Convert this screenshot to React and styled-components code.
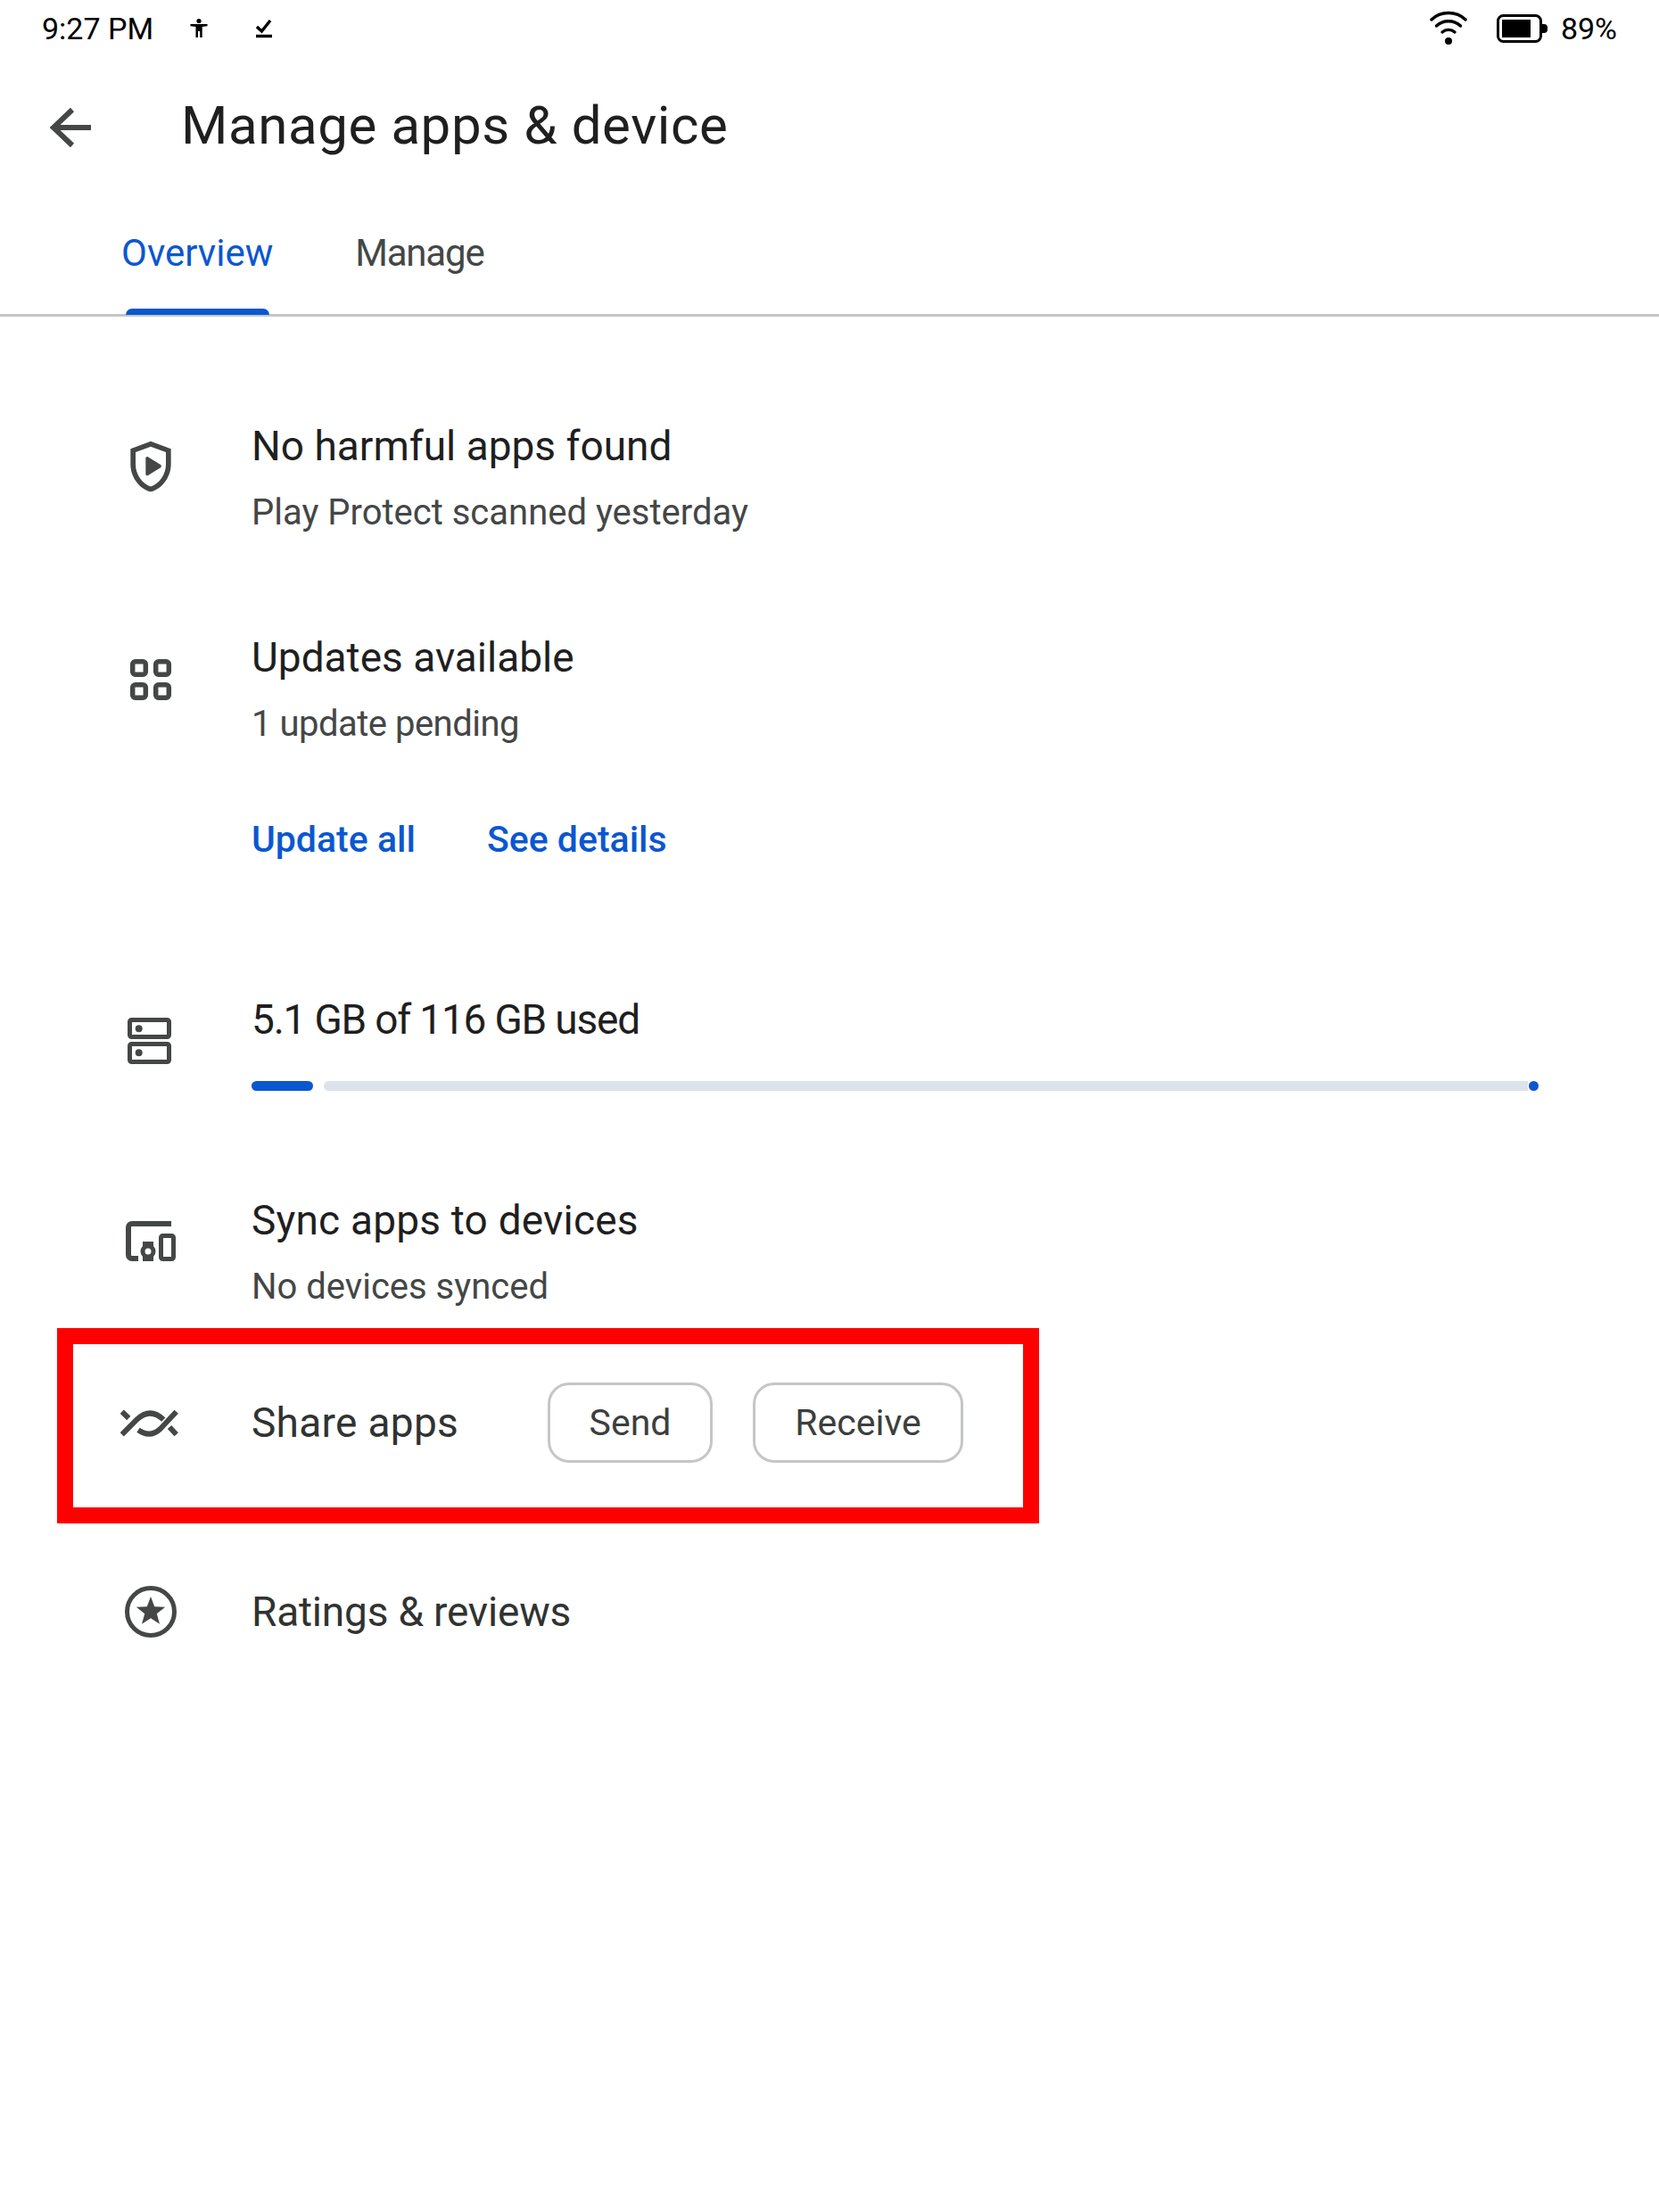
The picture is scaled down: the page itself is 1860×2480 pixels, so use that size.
import styled, { createGlobalStyle } from "styled-components";

const GlobalStyle = createGlobalStyle`
  html, body {
    margin: 0;
    padding: 0;
    background: #fff;
    font-family: Roboto, "Noto Sans", sans-serif;
  }
`;

const Page = styled.div`
  width: 1860px;
  height: 2480px;
  background: #fff;
  overflow: hidden;
`;

const StatusBar = styled.div`
  display: flex;
  align-items: center;
  height: 64px;
  padding: 0 47px;
  color: #000;
  font-size: 34px;
`;

const StatusIcon = styled.svg`
  flex: none;
  margin-left: ${(p) => p.$left || 0}px;
`;

const BatterySlot = styled.span`
  display: flex;
  margin-left: 33px;
`;

const BatteryLabel = styled.span`
  margin-left: 15px;
`;

const Spacer = styled.div`
  flex: 1;
`;

const Header = styled.div`
  display: flex;
  align-items: center;
  height: 74px;
  margin-top: 40px;
  padding-left: 50px;
`;

const Title = styled.h1`
  margin: 0 0 0 93px;
  font-size: 60px;
  font-weight: 400;
  line-height: 74px;
  letter-spacing: 0.6px;
  color: #1f1f1f;
`;

const Tabs = styled.div`
  display: flex;
  height: 98px;
  margin-top: 62px;
  padding: 14px 0 0 136px;
  border-bottom: 3px solid #c4c7c5;
`;

const Tab = styled.div`
  position: relative;
  margin-right: 92px;
  height: 60px;
  font-size: 42px;
  line-height: 60px;
  letter-spacing: ${(p) => (p.$active ? 0 : -1.2)}px;
  color: ${(p) => (p.$active ? "#0b57d0" : "#444746")};

  ${(p) =>
    p.$active &&
    `
    &::after {
      content: "";
      position: absolute;
      left: 5px;
      right: 4px;
      top: 92px;
      height: 7px;
      background: #0b57d0;
      border-radius: 7px 7px 0 0;
    }
  `}
`;

const List = styled.div`
  padding-top: 117px;
`;

const Row = styled.div`
  display: grid;
  grid-template-columns: 68px 1fr;
  column-gap: 79px;
  margin-top: ${(p) => p.$gap || 0}px;
  padding-left: 135px;
`;

const IconBox = styled.svg`
  display: block;
  width: 68px;
  height: 68px;
  margin-top: ${(p) => p.$top || 0}px;
  color: #444746;
`;

const RowTitle = styled.div`
  font-size: 46px;
  line-height: 56px;
  letter-spacing: ${(p) => p.$tracking || 0}px;
  color: ${(p) => p.$color || "#1f1f1f"};
`;

const RowSub = styled.div`
  margin-top: 21px;
  font-size: 40px;
  line-height: 52px;
  letter-spacing: ${(p) => p.$tracking || 0}px;
  color: #444746;
`;

const Actions = styled.div`
  display: flex;
  gap: 80px;
  margin-top: 77px;
`;

const LinkButton = styled.span`
  font-size: 41px;
  line-height: 52px;
  font-weight: 500;
  color: #0b57d0;
`;

const Meter = styled.div`
  position: relative;
  display: flex;
  gap: 12px;
  width: 1443px;
  height: 11px;
  margin-top: 41px;
`;

const MeterUsed = styled.div`
  width: 69px;
  background: #0b57d0;
  border-radius: 6px;
`;

const MeterFree = styled.div`
  flex: 1;
  margin-right: 12px;
  background: #dde3ea;
  border-radius: 6px 0 0 6px;
`;

const MeterDot = styled.div`
  position: absolute;
  right: 0;
  top: 0;
  width: 11px;
  height: 11px;
  border-radius: 50%;
  background: #0b57d0;
`;

const Highlight = styled.div`
  display: flex;
  align-items: center;
  box-sizing: border-box;
  width: 1101px;
  height: 219px;
  margin: 20px 0 0 64px;
  padding: 0 0 7px 53px;
  border: 18px solid #ff0000;
`;

const HighlightIcon = styled(IconBox)`
  flex: none;
  margin-right: 79px;
`;

const ShareLabel = styled.div`
  width: 332px;
  font-size: 46px;
  line-height: 56px;
  letter-spacing: 0.3px;
  color: #303332;
`;

const OutlineButton = styled.button`
  box-sizing: border-box;
  width: ${(p) => p.$width}px;
  height: 90px;
  margin-right: 45px;
  padding: 0;
  border: 3px solid #c4c7c5;
  border-radius: 24px;
  background: #fff;
  font-family: inherit;
  font-size: 41px;
  font-weight: 400;
  color: #3c3f3e;
`;

const CenteredRow = styled(Row)`
  align-items: center;
`;

function BackArrow() {
  return (
    <svg width="60" height="60" viewBox="0 0 60 60" fill="none" stroke="#444746" strokeWidth="6">
      <path d="M52 32H9" />
      <path d="M31 12 10 32l21 20" />
    </svg>
  );
}

function WifiIcon() {
  return (
    <svg width="42" height="40" viewBox="0 0 42 40" fill="none" stroke="#000" strokeWidth="3.4" strokeLinecap="round">
      <path d="M2 10C12 0 30 0 40 10" />
      <path d="M7.5 17C15 10 27 10 34.5 17" />
      <path d="M14 24C18 20.5 24 20.5 28 24" />
      <circle cx="21" cy="34" r="4" fill="#000" stroke="none" />
    </svg>
  );
}

function BatteryIcon() {
  return (
    <svg width="57" height="32" viewBox="0 0 57 32" fill="none">
      <rect x="1.5" y="1.5" width="48" height="29" rx="6" stroke="#000" strokeWidth="3" />
      <rect x="6" y="6" width="32" height="20" fill="#000" />
      <path d="M51 11h2a4 4 0 0 1 4 4v2a4 4 0 0 1-4 4h-2z" fill="#000" />
    </svg>
  );
}

function App() {
  return (
    <Page>
      <GlobalStyle />
      <StatusBar>
        <span>9:27 PM</span>
        <StatusIcon $left={41} width="20" height="24" viewBox="0 0 20 24" fill="#000">
          <circle cx="10" cy="3.5" r="2.6" />
          <path d="M0.5 7h19v2.2l-5.8.8V22h-2.5v-7H9v7H6.5V10L0.5 9.2z" />
        </StatusIcon>
        <StatusIcon $left={54} width="18" height="22" viewBox="0 0 18 22" fill="none" stroke="#000">
          <path d="M1 9l5.5 5L16 2" strokeWidth="3.4" />
          <path d="M0 19.5h18" strokeWidth="3.4" />
        </StatusIcon>
        <Spacer />
        <WifiIcon />
        <BatterySlot>
          <BatteryIcon />
        </BatterySlot>
        <BatteryLabel>89%</BatteryLabel>
      </StatusBar>

      <Header>
        <BackArrow />
        <Title>Manage apps &amp; device</Title>
      </Header>

      <Tabs>
        <Tab $active>Overview</Tab>
        <Tab>Manage</Tab>
      </Tabs>

      <List>
        <Row>
          <IconBox $top={17} viewBox="0 0 24 24" fill="currentColor">
            <path d="M12 2 4 5v6.09c0 5.05 3.41 9.76 8 10.91 4.59-1.15 8-5.86 8-10.91V5l-8-3zm6 9.09c0 4-2.55 7.7-6 8.83-3.45-1.13-6-4.82-6-8.83v-4.7l6-2.25 6 2.25v4.7z" />
            <path d="M10 8.7c0-.5.5-.8.9-.5l5 3.1c.4.3.4.8 0 1.1l-5 3.1c-.4.3-.9 0-.9-.5z" />
          </IconBox>
          <div>
            <RowTitle>No harmful apps found</RowTitle>
            <RowSub>Play Protect scanned yesterday</RowSub>
          </div>
        </Row>

        <Row $gap={108}>
          <IconBox $top={19} viewBox="0 0 68 68" fill="none" stroke="currentColor" strokeWidth="5.5">
            <rect x="13.7" y="13.7" width="14.6" height="14.6" rx="3" />
            <rect x="39.7" y="13.7" width="14.6" height="14.6" rx="3" />
            <rect x="13.7" y="39.7" width="14.6" height="14.6" rx="3" />
            <rect x="39.7" y="39.7" width="14.6" height="14.6" rx="3" />
          </IconBox>
          <div>
            <RowTitle>Updates available</RowTitle>
            <RowSub $tracking={-0.5}>1 update pending</RowSub>
            <Actions>
              <LinkButton>Update all</LinkButton>
              <LinkButton>See details</LinkButton>
            </Actions>
          </div>
        </Row>

        <Row $gap={148}>
          <IconBox $top={18} viewBox="0 0 68 68" fill="none" stroke="currentColor" strokeWidth="5">
            <rect x="10.5" y="10.5" width="44" height="19" rx="2" />
            <rect x="10.5" y="37.5" width="44" height="20" rx="2" />
            <circle cx="20.7" cy="20.3" r="4" fill="currentColor" stroke="none" />
            <circle cx="20.7" cy="47.3" r="4" fill="currentColor" stroke="none" />
          </IconBox>
          <div>
            <RowTitle $tracking={-1.2}>5.1 GB of 116 GB used</RowTitle>
            <Meter>
              <MeterUsed />
              <MeterFree />
              <MeterDot />
            </Meter>
          </div>
        </Row>

        <Row $gap={117}>
          <IconBox $top={17} viewBox="0 0 68 68" fill="none" stroke="currentColor">
            <path d="M57 15H13a4 4 0 0 0-4 4v31a4 4 0 0 0 4 4h7" strokeWidth="6" />
            <rect x="45.5" y="28.5" width="14" height="26" rx="2" strokeWidth="5" />
            <circle cx="31" cy="46" r="6" strokeWidth="5" />
            <path d="M25 35h12v5H25zM25 52h12v5H25z" fill="currentColor" stroke="none" />
          </IconBox>
          <div>
            <RowTitle $tracking={0.2}>Sync apps to devices</RowTitle>
            <RowSub>No devices synced</RowSub>
          </div>
        </Row>

        <Highlight>
          <HighlightIcon viewBox="0 0 68 68" fill="none" stroke="currentColor" strokeWidth="6">
            <path d="M1.7 47.3 18.3 30.7Q33.3 16.3 48.3 30.7" />
            <path d="M20 42.3Q33.3 51.7 45 40.7L62.7 21.7" />
            <path d="M55 39 62.7 47.3" />
            <path d="M1.7 21.7 9.3 29" />
          </HighlightIcon>
          <ShareLabel>Share apps</ShareLabel>
          <OutlineButton $width={185}>Send</OutlineButton>
          <OutlineButton $width={236}>Receive</OutlineButton>
        </Highlight>

        <CenteredRow $gap={65}>
          <IconBox viewBox="0 0 68 68" fill="none" stroke="currentColor" strokeWidth="5">
            <circle cx="34" cy="34" r="26.5" />
            <path
              d="M34 17 38.2 28.2 50.2 28.7 40.8 36.2 44 47.8 34 41.2 24 47.8 27.2 36.2 17.8 28.7 29.8 28.2z"
              fill="currentColor"
              stroke="none"
            />
          </IconBox>
          <RowTitle $color="#303332" $tracking={-0.2}>Ratings &amp; reviews</RowTitle>
        </CenteredRow>
      </List>
    </Page>
  );
}

export default App;
